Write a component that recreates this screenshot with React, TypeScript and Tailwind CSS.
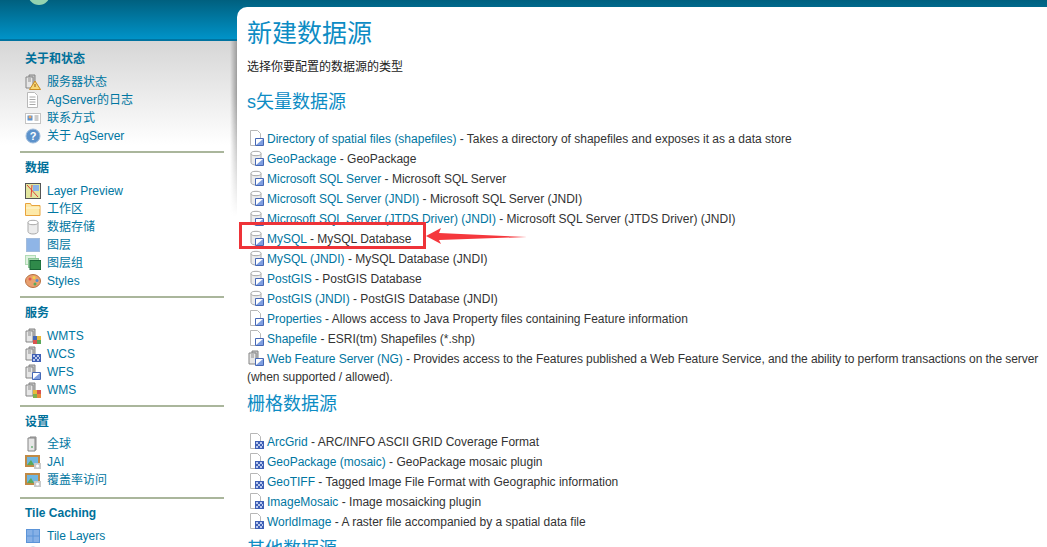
import type { ReactNode } from "react";

const FONT = "font-['Liberation_Sans','Noto_Sans_CJK_SC',sans-serif]";

function Cylinder() {
  return (
    <>
      <path d="M2 3.5v9c0 1.6 2.5 2.5 5 2.5s5-.9 5-2.500v-9z" fill="#ececec" stroke="#a9a9a9" />
      <ellipse cx="7" cy="3.5" rx="5" ry="2.2" fill="#fff" stroke="#a9a9a9" />
    </>
  );
}

function Server({ x = 1 }: { x?: number }) {
  return (
    <>
      <path d={`M${x + 3} 1h6v11h-6z`} fill="#c4c4c4" stroke="#858585" />
      <path d={`M${x} 3h7v11h-7z`} fill="#e6e6e6" stroke="#858585" />
      <path d={`M${x + 2} 5h3M${x + 2} 7h3`} stroke="#8f8f8f" />
    </>
  );
}

function Page() {
  return <path d="M2.5.5h7l3 3v12h-10z" fill="#fff" stroke="#b8b8b8" />;
}

function VectorBadge() {
  return (
    <>
      <path d="M7.5 8.5h8v7h-8z" fill="#fff" stroke="#4668b5" />
      <path d="M8 15l7-6v6z" fill="#7f9ee0" />
    </>
  );
}

function RasterBadge() {
  return (
    <>
      <path d="M7 8h9v8h-9z" fill="#3f5fb5" />
      <path d="M8 9h2v2h-2zM12 9h2v2h-2zM10 11h2v2h-2zM14 11h1v2h-1zM8 13h2v2h-2zM12 13h2v2h-2z" fill="#b9c9ee" />
    </>
  );
}

function Mosaic({ colors }: { colors: string[] }) {
  return (
    <>
      <rect x="8" y="8" width="4" height="4" fill={colors[0]} />
      <rect x="12" y="8" width="4" height="4" fill={colors[1]} />
      <rect x="8" y="12" width="4" height="4" fill={colors[2]} />
      <rect x="12" y="12" width="4" height="4" fill={colors[3]} />
    </>
  );
}

function Framed() {
  return (
    <>
      <rect x="0" y="1" width="15" height="12" fill="#c08a45" />
      <rect x="2" y="3" width="11" height="8" fill="#6fb6e0" />
      <path d="M2 11l4-5 3 5z" fill="#5aa85a" />
      <rect x="9" y="9" width="7" height="6" fill="#c9c9c9" />
      <circle cx="12.5" cy="12" r="1.5" fill="#fff" />
    </>
  );
}

const icons: Record<string, ReactNode> = {
  status: (
    <>
      <Server />
      <path d="M10 7l5.5 8.5h-11z" fill="#f7d774" stroke="#c98a20" />
      <path d="M10 10v3" stroke="#9a5a10" />
    </>
  ),
  log: (
    <>
      <Page />
      <path d="M4.5 5h6M4.5 7.5h6M4.5 10h6M4.5 12.5h6" stroke="#a8a8a8" />
    </>
  ),
  contact: (
    <>
      <rect x=".5" y="3.5" width="15" height="10" fill="#fff" stroke="#c4c4c4" />
      <rect x="2.5" y="5.5" width="5" height="5" fill="#5d93cf" />
      <circle cx="5" cy="7" r="1.5" fill="#e8a566" />
      <path d="M9.5 6h4M9.5 8h4M9.5 10h4" stroke="#9a9a9a" />
    </>
  ),
  about: (
    <>
      <circle cx="8" cy="8" r="7" fill="#5c92cb" stroke="#9dbbdc" />
      <text x="8" y="12" textAnchor="middle" fontSize="11" fontWeight="700" fill="#fff" fontFamily="'Liberation Sans',sans-serif">?</text>
    </>
  ),
  preview: (
    <>
      <rect x=".5" y=".5" width="15" height="15" fill="#e2e6a0" stroke="#555" />
      <path d="M8 2h6v6h-6z" fill="#8ab3e8" />
      <path d="M2 2l11 12M7 2l-1 12" stroke="#e0413a" />
    </>
  ),
  folder: (
    <>
      <path d="M.5 2.500h5l1 2h8.500v10h-14.500z" fill="#fde9a8" stroke="#e8a33d" />
      <path d="M1 7h14" stroke="#fff7d8" />
    </>
  ),
  store: (
    <g transform="translate(1 0)">
      <Cylinder />
    </g>
  ),
  layer: <rect x="1.5" y="1.5" width="13" height="13" fill="#8fb5e6" stroke="#a3bcdc" />,
  group: (
    <>
      <rect x=".5" y=".5" width="10" height="9" fill="#dff1df" stroke="#b2dcb6" />
      <rect x="3.5" y="3.5" width="10" height="9" fill="#a9d6ae" stroke="#8cc695" />
      <rect x="5" y="5.5" width="11" height="9" fill="#2f8a4a" stroke="#176434" />
    </>
  ),
  styles: (
    <>
      <ellipse cx="8" cy="8" rx="7.5" ry="6.5" fill="#e9a06f" stroke="#b86f3f" />
      <circle cx="5" cy="6" r="1.5" fill="#e2574c" />
      <circle cx="9" cy="4.500" r="1.5" fill="#f1d24b" />
      <circle cx="12" cy="7.500" r="1.5" fill="#4f8fd6" />
      <circle cx="10" cy="11" r="1.5" fill="#5aa85a" />
    </>
  ),
  wmts: (
    <>
      <Server />
      <Mosaic colors={["#4668b5", "#e6b93c", "#d9534f", "#5aa85a"]} />
    </>
  ),
  wcs: (
    <>
      <Server />
      <RasterBadge />
    </>
  ),
  wfs: (
    <>
      <Server />
      <VectorBadge />
    </>
  ),
  wms: (
    <>
      <Server />
      <Mosaic colors={["#e6b93c", "#d9534f", "#7fb04c", "#e6893c"]} />
    </>
  ),
  global: (
    <g transform="translate(2 0)">
      <path d="M3 1h6v13h-6z" fill="#c4c4c4" stroke="#858585" />
      <path d="M1 2h7v13h-7z" fill="#e6e6e6" stroke="#858585" />
      <path d="M4 11h2" stroke="#2f9a45" />
    </g>
  ),
  framed: <Framed />,
  tiles: (
    <>
      <rect x="1" y="1" width="14" height="14" fill="#5b94d8" />
      <path d="M2 2h5.500v5.500h-5.500zM8.500 2h5.500v5.500h-5.500zM2 8.500h5.500v5.500h-5.500zM8.500 8.500h5.500v5.500h-5.500z" fill="#86b0e6" />
    </>
  ),
  vector: (
    <>
      <g transform="translate(1 0)">
        <Cylinder />
      </g>
      <VectorBadge />
    </>
  ),
  dirvector: (
    <>
      <Page />
      <VectorBadge />
    </>
  ),
  ngserver: (
    <>
      <Server />
      <VectorBadge />
    </>
  ),
  raster: (
    <>
      <Page />
      <RasterBadge />
    </>
  ),
};

function Icon({ name }: { name: string }) {
  return (
    <svg width="16" height="16" viewBox="0 0 16 16" className="block shrink-0">
      {icons[name]}
    </svg>
  );
}

const menu = [
  {
    title: "关于和状态",
    box: "mb-[6px] border-b-[2px] border-[#aab69c] pb-[6px]",
    gap: "mb-[5px]",
    items: [
      ["status", "服务器状态"],
      ["log", "AgServer的日志"],
      ["contact", "联系方式"],
      ["about", "关于 AgServer"],
    ],
  },
  {
    title: "数据",
    box: "mb-[6px] border-b-[2px] border-[#aab69c] pb-[6px]",
    gap: "mb-[5px]",
    items: [
      ["preview", "Layer Preview"],
      ["folder", "工作区"],
      ["store", "数据存储"],
      ["layer", "图层"],
      ["group", "图层组"],
      ["styles", "Styles"],
    ],
  },
  {
    title: "服务",
    box: "mb-[6px] border-b-[2px] border-[#aab69c] pb-[6px]",
    gap: "mb-[5px]",
    items: [
      ["wmts", "WMTS"],
      ["wcs", "WCS"],
      ["wfs", "WFS"],
      ["wms", "WMS"],
    ],
  },
  {
    title: "设置",
    box: "mb-[5px] border-b-[2px] border-[#aab69c] pb-[8px]",
    gap: "mb-[4px]",
    items: [
      ["global", "全球"],
      ["framed", "JAI"],
      ["framed", "覆盖率访问"],
    ],
  },
  {
    title: "Tile Caching",
    box: "",
    gap: "mb-[5px]",
    items: [
      ["tiles", "Tile Layers"],
      ["about", "Caching Defaults"],
    ],
  },
];

const vectorStores = [
  ["dirvector", "Directory of spatial files (shapefiles)", "Takes a directory of shapefiles and exposes it as a data store"],
  ["vector", "GeoPackage", "GeoPackage"],
  ["vector", "Microsoft SQL Server", "Microsoft SQL Server"],
  ["vector", "Microsoft SQL Server (JNDI)", "Microsoft SQL Server (JNDI)"],
  ["vector", "Microsoft SQL Server (JTDS Driver) (JNDI)", "Microsoft SQL Server (JTDS Driver) (JNDI)"],
  ["vector", "MySQL", "MySQL Database"],
  ["vector", "MySQL (JNDI)", "MySQL Database (JNDI)"],
  ["vector", "PostGIS", "PostGIS Database"],
  ["vector", "PostGIS (JNDI)", "PostGIS Database (JNDI)"],
  ["dirvector", "Properties", "Allows access to Java Property files containing Feature information"],
  ["dirvector", "Shapefile", "ESRI(tm) Shapefiles (*.shp)"],
];

const rasterStores = [
  ["ArcGrid", "ARC/INFO ASCII GRID Coverage Format"],
  ["GeoPackage (mosaic)", "GeoPackage mosaic plugin"],
  ["GeoTIFF", "Tagged Image File Format with Geographic information"],
  ["ImageMosaic", "Image mosaicking plugin"],
  ["WorldImage", "A raster file accompanied by a spatial data file"],
];

function StoreRow({ icon, name, text }: { icon: string; name: string; text: string }) {
  return (
    <li className="h-5 whitespace-nowrap leading-5">
      <span className="mr-[3px] ml-[1px] inline-block w-[16px] align-[-3px]">
        <Icon name={icon} />
      </span>
      <a className="text-[#0076a1]">{name}</a> - {text}
    </li>
  );
}

export default function App() {
  return (
    <div className={`relative flex h-[547px] w-[1047px] flex-col overflow-hidden bg-white text-[12px] text-[#333] ${FONT}`}>
      <div className="flex min-h-0 flex-1 flex-col bg-[linear-gradient(#d6d6d6_41px,#ffffff_145px)]">
        <div className="relative h-[41px] shrink-0 border-b-[2px] border-[#0073a0] bg-[linear-gradient(#00607f,#0093c8)]">
          <div className="absolute top-[-8px] left-[28px] h-[13px] w-[22px] rounded-b-full bg-[#93d3b0]" />
        </div>
        <aside className="min-h-0 w-[237px] flex-1 pt-[9px] pl-[20px]">
          {menu.map((group) => (
            <section key={group.title} className={`w-[204px] ${group.box}`}>
              <h3 className={`h-[18px] pl-[5px] text-[12px] leading-[18px] font-bold text-[#00709a] ${group.gap}`}>{group.title}</h3>
              <ul>
                {group.items.map(([icon, label]) => (
                  <li key={label} className="flex h-[18px] items-center gap-[6px] pl-[5px] leading-[18px] text-[#0076a1]">
                    <Icon name={icon} />
                    <span>{label}</span>
                  </li>
                ))}
              </ul>
            </section>
          ))}
        </aside>
      </div>
      <div className="absolute top-[41px] left-[230px] h-[175px] w-[7px] bg-[linear-gradient(90deg,transparent,#9c9c9c)] [mask-image:linear-gradient(#000_30%,transparent)]" />
      <main className="absolute top-[7px] right-0 bottom-0 left-[237px] rounded-tl-[10px] bg-white pl-[10px]">
        <h1 className="pt-[9px] text-[25px] leading-[34px] font-normal text-[#0d8cc4]">新建数据源</h1>
        <p className="mt-[8px] h-[18px] leading-[18px] text-[#222]">选择你要配置的数据源的类型</p>
        <h2 className="mt-[14px] h-[24px] text-[18px] leading-[24px] font-normal text-[#0d8cc4]">s矢量数据源</h2>
        <ul className="mt-[15px]">
          {vectorStores.map(([icon, name, text]) => (
            <StoreRow key={name} icon={icon} name={name} text={text} />
          ))}
          <li className="pt-[1px] leading-[18px] tracking-[-0.06px]">
            <span className="mr-[3px] ml-[1px] inline-block w-[16px] align-[-3px]">
              <Icon name="ngserver" />
            </span>
            <a className="text-[#0076a1]">Web Feature Server (NG)</a> - Provides access to the Features published a Web Feature Service, and the ability to perform transactions on the server (when supported / allowed).
          </li>
        </ul>
        <h2 className="mt-[6px] h-[24px] text-[18px] leading-[24px] font-normal text-[#0d8cc4]">栅格数据源</h2>
        <ul className="mt-[16px]">
          {rasterStores.map(([name, text]) => (
            <StoreRow key={name} icon="raster" name={name} text={text} />
          ))}
        </ul>
        <h2 className="mt-[5px] h-[24px] text-[18px] leading-[24px] font-normal text-[#0d8cc4]">其他数据源</h2>
      </main>
      <div className="absolute top-[222px] left-[239px] h-[27px] w-[187px] border-[3px] border-[#ee3338]" />
      <svg className="absolute top-[228px] left-[425px]" width="104" height="18" viewBox="0 0 104 18">
        <path d="M1 8L16 0l-2 5 88 4-88 3 2 4z" fill="#f5383d" />
      </svg>
    </div>
  );
}
